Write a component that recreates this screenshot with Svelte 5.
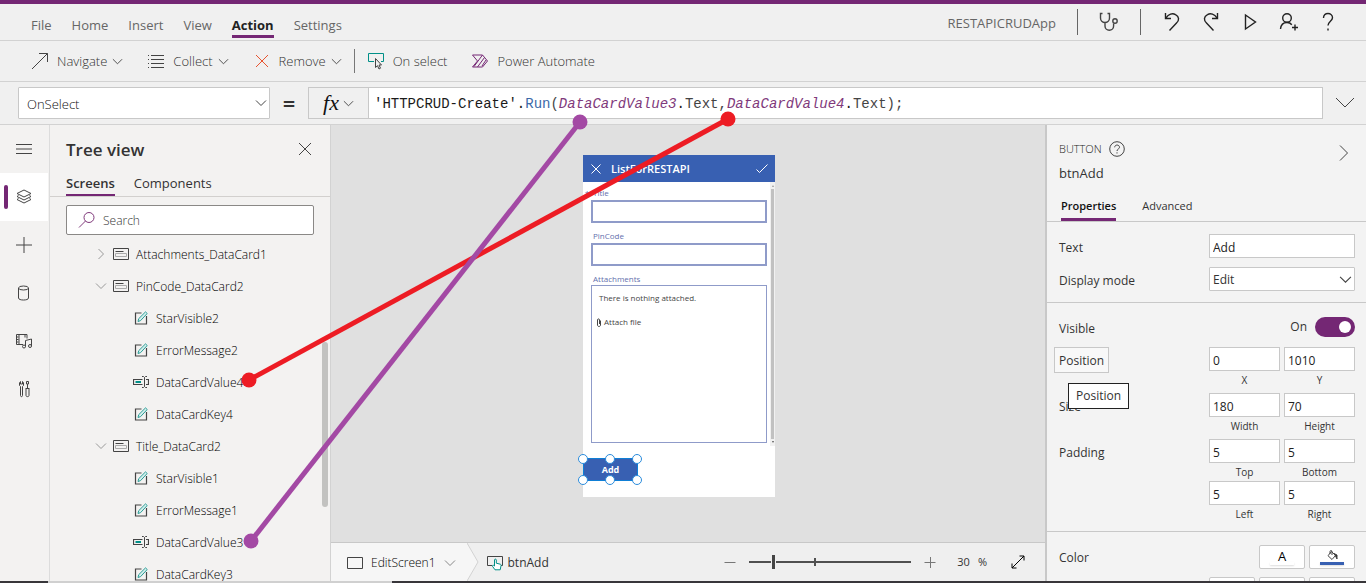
<script lang="ts">
  interface TreeItem {
    name: string;
    kind: 'card' | 'label' | 'input';
    open?: boolean;
  }

  interface Token {
    text: string;
    kind: 'name' | 'dot' | 'fn' | 'ref' | 'member';
  }

  const menu = ['File', 'Home', 'Insert', 'View', 'Action', 'Settings'];
  const railItems = ['Tree view', 'Insert', 'Data', 'Media', 'Advanced tools'];

  const tree: TreeItem[] = [
    { name: 'Attachments_DataCard1', kind: 'card', open: false },
    { name: 'PinCode_DataCard2', kind: 'card', open: true },
    { name: 'StarVisible2', kind: 'label' },
    { name: 'ErrorMessage2', kind: 'label' },
    { name: 'DataCardValue4', kind: 'input' },
    { name: 'DataCardKey4', kind: 'label' },
    { name: 'Title_DataCard2', kind: 'card', open: true },
    { name: 'StarVisible1', kind: 'label' },
    { name: 'ErrorMessage1', kind: 'label' },
    { name: 'DataCardValue3', kind: 'input' },
    { name: 'DataCardKey3', kind: 'label' }
  ];

  const formula: Token[] = [
    { text: "'HTTPCRUD-Create'", kind: 'name' },
    { text: '.', kind: 'dot' },
    { text: 'Run', kind: 'fn' },
    { text: '(', kind: 'member' },
    { text: 'DataCardValue3', kind: 'ref' },
    { text: '.', kind: 'dot' },
    { text: 'Text,', kind: 'member' },
    { text: 'DataCardValue4', kind: 'ref' },
    { text: '.', kind: 'dot' },
    { text: 'Text);', kind: 'member' }
  ];

  const groups = [
    { label: 'Position', fields: [['X', '0'], ['Y', '1010']] },
    { label: 'Size', fields: [['Width', '180'], ['Height', '70']] },
    { label: 'Padding', fields: [['Top', '5'], ['Bottom', '5'], ['Left', '5'], ['Right', '5']] }
  ];

  let activeMenu = $state('Action');
  let activeRail = $state('Tree view');
  let visible = $state(true);
  let zoom = $state(14);
</script>

{#snippet chevron(size: number)}
  <svg class="chevron" width={size} height={size} viewBox="0 0 12 12"><path d="M1 3.5l5 5 5-5" /></svg>
{/snippet}

<div class="app">
  <header class="menubar">
    <nav class="menu">
      {#each menu as item}
        <button class="menu-item" class:active={item === activeMenu} onclick={() => (activeMenu = item)}>{item}</button>
      {/each}
    </nav>
    <div class="app-actions">
      <span class="app-name">RESTAPICRUDApp</span>
      <span class="rule"></span>
      <button class="icon-btn" aria-label="App checker">
        <svg class="checker" width="20" height="20" viewBox="0 0 20 20">
          <path d="M3.500 1.500H1.500v4.500a4.500 4.500 0 0 0 9 0V1.500H8.500M6 10.500V14a4.300 4.300 0 0 0 8.600 0v-2.500" />
          <circle cx="16" cy="9" r="2.200" />
        </svg>
      </button>
      <span class="rule"></span>
      <button class="icon-btn" aria-label="Undo">
        <svg width="18" height="20" viewBox="0 0 18 20"><path class="bold" d="M2.500 1v5.500H8M3 6C5.500 2 9.500 .8 12.500 2.600c4 2 3.800 5.800 1 8.500L6.500 18.500" /></svg>
      </button>
      <button class="icon-btn" aria-label="Redo">
        <svg width="18" height="20" viewBox="0 0 18 20"><path class="bold" d="M15.500 1v5.500H10M15 6C12.500 2 8.500 .8 5.500 2.600c-4 2-3.800 5.800-1 8.500l7 7.400" /></svg>
      </button>
      <button class="icon-btn" aria-label="Preview the app">
        <svg width="18" height="20" viewBox="0 0 18 20"><path class="bold" d="M4.500 3v14l10-7z" /></svg>
      </button>
      <button class="icon-btn" aria-label="Share">
        <svg width="20" height="20" viewBox="0 0 20 20">
          <circle class="bold" cx="8" cy="6" r="4.300" />
          <path class="bold" d="M1.500 17c.4-4 3-6.500 6.500-6.500 2 0 3.700.8 4.800 2.200M16 12.500v6M13 15.500h6" />
        </svg>
      </button>
      <button class="icon-btn" aria-label="Help">
        <svg width="18" height="20" viewBox="0 0 18 20"><path class="bold" d="M4.500 6c0-3 2-4.500 4.500-4.500s4.500 1.700 4.500 4.200C13.500 9 9 9.500 9 13.500M9 16.500v2" /></svg>
      </button>
    </div>
  </header>

  <div class="ribbon">
    <button class="ribbon-btn">
      <svg width="18" height="18" viewBox="0 0 18 18"><path d="M1 17L16.500 1.500M8 1.500h8.500V10" /></svg>
      <span>Navigate</span>{@render chevron(11)}
    </button>
    <button class="ribbon-btn">
      <svg width="18" height="18" viewBox="0 0 18 18"><path d="M4 3.500h13M4 7.500h13M4 11.500h13M4 15.500h13M1 3.500h1M1 7.500h1M1 11.500h1M1 15.500h1" /></svg>
      <span>Collect</span>{@render chevron(11)}
    </button>
    <button class="ribbon-btn">
      <svg class="remove" width="18" height="18" viewBox="0 0 18 18"><path d="M3 3l12 12M15 3L3 15" /></svg>
      <span>Remove</span>{@render chevron(11)}
    </button>
    <span class="ribbon-rule"></span>
    <button class="ribbon-btn">
      <svg width="18" height="18" viewBox="0 0 18 18">
        <path class="teal" d="M7 9.500H1.500v-8h15v8H14" />
        <path class="pointer" d="M8.500 6.500v9l2-1.800 1.500 3.300 1.500-.8-1.500-3.200h2.500z" />
      </svg>
      <span>On select</span>
    </button>
    <button class="ribbon-btn">
      <svg class="flow" width="18" height="18" viewBox="0 0 18 18"><path d="M1.500 3h10l5 6-5 6h-10M1.500 3l5 6-5 6M11.500 3L3 14.500M13.500 5.500L6.500 15M15 8l-4 6" /></svg>
      <span>Power Automate</span>
    </button>
  </div>

  <div class="formula-bar">
    <div class="select property">
      <select aria-label="Property"><option>OnSelect</option></select>
      {@render chevron(12)}
    </div>
    <span class="equals">=</span>
    <div class="formula">
      <button class="fx" aria-label="Insert function"><i>fx</i>{@render chevron(11)}</button>
      <div class="code" role="textbox" tabindex="0" aria-label="Formula" contenteditable="true" spellcheck="false">{#each formula as token}<span class={token.kind}>{token.text}</span>{/each}</div>
    </div>
    <button class="icon-btn expand" aria-label="Expand formula bar">
      <svg width="20" height="12" viewBox="0 0 20 12"><path d="M1 1l9 9 9-9" /></svg>
    </button>
  </div>

  <main class="workspace">
    <nav class="rail">
      <button class="rail-btn" aria-label="Menu">
        <svg width="18" height="18" viewBox="0 0 18 18"><path d="M1 4.500h16M1 9h16M1 13.500h16" /></svg>
      </button>
      {#each railItems as item}
        <button class="rail-btn" class:active={item === activeRail} aria-label={item} onclick={() => (activeRail = item)}>
          <svg width="18" height="18" viewBox="0 0 18 18">
            {#if item === 'Tree view'}
              <path d="M9 2l7 3.500L9 9 2 5.500zM3.500 7.500L2 8.500 9 12l7-3.500-1.500-1M3.500 10.500L2 11.500 9 15l7-3.500-1.500-1" />
            {:else if item === 'Insert'}
              <path d="M9 1v16M1 9h16" />
            {:else if item === 'Data'}
              <ellipse cx="8.500" cy="4" rx="5" ry="2" />
              <path d="M3.500 4v10c0 2.700 10 2.700 10 0V4" />
            {:else if item === 'Media'}
              <path d="M8 12.500H1.500v-10h10.500v4M4 2.500v10M1.500 5h2M1.500 7.500h2M1.500 10h2M10 2.500v3" />
              <path d="M10.500 14.500V8.500l6-1.500v7" />
              <circle cx="9" cy="14.500" r="1.500" /><circle cx="15" cy="14" r="1.500" />
            {:else}
              <path d="M5.500 1.500L4.500 3v2.500l1 1v9c0 1.500 2 1.500 2 0v-9l1-1V3l-1-1.500v2.500h-2zM10.500 8.500h4M11 9v6.500c0 1.500 3 1.500 3 0V9M12.500 8.500V4M11.500 1.500h2V4h-2z" />
            {/if}
          </svg>
        </button>
      {/each}
    </nav>

    <aside class="tree">
      <div class="tree-head">
        <h2>Tree view</h2>
        <button class="icon-btn" aria-label="Close">
          <svg width="14" height="14" viewBox="0 0 14 14"><path d="M1 1l12 12M13 1L1 13" /></svg>
        </button>
      </div>
      <div class="tree-tabs">
        <button class="tree-tab active">Screens</button>
        <button class="tree-tab">Components</button>
      </div>
      <label class="search">
        <svg width="18" height="18" viewBox="0 0 18 18"><circle cx="11" cy="6.500" r="5" /><path d="M7.500 10L1 16.500" /></svg>
        <input type="text" placeholder="Search" aria-label="Search" />
      </label>
      <div class="tree-body">
        <ul>
          {#each tree as item}
            <li class={item.kind}>
              {#if item.kind === 'card'}
                <button class="twisty" class:closed={!item.open} aria-label="Toggle {item.name}">{@render chevron(12)}</button>
                <svg width="16" height="12" viewBox="0 0 16 12"><path d="M.5.5h15v11H.5zM2.500 3.500h8" /><path class="pale" d="M2.500 5.500h11v3h-11z" /></svg>
              {:else if item.kind === 'label'}
                <svg width="16" height="14" viewBox="0 0 16 14">
                  <path class="solid" d="M8.500 2H2.500v11h11V5" />
                  <path class="pen" d="M5 10.500l.7-2.800L12.500.9l1.700 1.600L7.600 9.600z" />
                </svg>
              {:else}
                <svg width="16" height="14" viewBox="0 0 16 14">
                  <path class="solid" d="M9.500 4.500h-9v5h9M13 4.500h2.500v5H13" />
                  <path class="bar" d="M2.500 7h5.500" />
                  <path d="M9 1.500h1.500l1 1 1-1H14M9 12.500h1.500l1-1 1 1H14M11.500 2.500v9" />
                </svg>
              {/if}
              <span>{item.name}</span>
            </li>
          {/each}
        </ul>
        <div class="tree-scroll"></div>
      </div>
    </aside>

    <section class="stage">
      <div class="canvas">
        <div class="phone">
          <div class="phone-head">
            <svg width="12" height="12" viewBox="0 0 12 12"><path d="M1.500 1.500l9 9M10.500 1.500l-9 9" /></svg>
            <strong>ListForRESTAPI</strong>
            <svg width="12" height="12" viewBox="0 0 12 12"><path d="M.5 6.500l3 3 8-8" /></svg>
          </div>
          <div class="form">
            <div class="fields">
              <label for="title"><span class="star">*</span>Title</label>
              <input id="title" type="text" />
              <label for="pin">PinCode</label>
              <input id="pin" type="text" />
              <span class="caption">Attachments</span>
              <div class="attachments">
                <span>There is nothing attached.</span>
                <button class="attach">
                  <svg width="4" height="9" viewBox="0 0 4 9"><path d="M3.500 2.500v4.500c0 2-3 2-3 0V2c0-1.500 2-1.500 2 0v4" /></svg>
                  Attach file
                </button>
              </div>
            </div>
            <div class="form-scroll"><span class="up"></span><span class="thumb"></span><span class="down"></span></div>
          </div>
          <button class="add">
            Add
            {#each ['tl', 'tc', 'tr', 'bl', 'bc', 'br'] as spot}<span class="handle {spot}"></span>{/each}
          </button>
        </div>
      </div>

      <footer class="statusbar">
        <button class="crumb screen">
          <svg width="16" height="12" viewBox="0 0 16 12"><path d="M.5.5h15v11H.5z" /></svg>
          <span>EditScreen1</span>
          {@render chevron(12)}
        </button>
        <svg class="crumb-edge" width="12" height="38" viewBox="0 0 12 38"><path class="fill" d="M0 0l11 19L0 38z" /><path d="M0 0l11 19L0 38" /></svg>
        <button class="crumb">
          <svg width="16" height="16" viewBox="0 0 16 16">
            <path d="M5 10.500H.5V1.500h15v9H14" />
            <path class="hand" d="M7.500 11V5c0-1.200 1.800-1.200 1.800 0v3.200l4 1c.8.3.9.8.7 1.600l-.8 4H8l-2.500-3.500c-.5-.9.7-1.600 2-.3z" />
          </svg>
          <span>btnAdd</span>
        </button>
        <div class="zoom">
          <button class="icon-btn" aria-label="Zoom out"><svg class="step" width="12" height="12" viewBox="0 0 12 12"><path d="M.5 6.500h11" /></svg></button>
          <div class="slider"><input type="range" aria-label="Zoom" bind:value={zoom} /><span class="tick"></span></div>
          <button class="icon-btn" aria-label="Zoom in"><svg class="step" width="12" height="12" viewBox="0 0 12 12"><path d="M.5 6.500h11M6.500 1v11" /></svg></button>
          <span class="percent"><span>30</span><span>%</span></span>
          <button class="icon-btn" aria-label="Fit to screen"><svg width="14" height="14" viewBox="0 0 14 14"><path class="fit" d="M1 13L13 1M8.500 1H13v4.500M1 8.500V13h4.500" /></svg></button>
        </div>
      </footer>
    </section>

    <aside class="props">
      <div class="props-head">
        <div class="props-kind">
          <span>BUTTON</span>
          <svg width="16" height="16" viewBox="0 0 16 16"><circle cx="8" cy="8" r="7.300" /><path d="M5.700 6.300c0-3 4.800-3 4.800 0C10.500 8 8 8 8 10M8 11.300v1.200" /></svg>
        </div>
        <div class="props-name">btnAdd</div>
        <button class="icon-btn collapse" aria-label="Collapse pane">
          <svg width="10" height="18" viewBox="0 0 10 18"><path d="M1 1.500L8.500 9 1 16.500" /></svg>
        </button>
      </div>
      <div class="props-tabs">
        <button class="props-tab active">Properties</button>
        <button class="props-tab">Advanced</button>
      </div>

      <div class="section basics">
        <div class="prop"><label for="text">Text</label><input id="text" type="text" value="Add" /></div>
        <div class="prop">
          <label for="mode">Display mode</label>
          <div class="select"><select id="mode"><option>Edit</option></select>{@render chevron(13)}</div>
        </div>
      </div>

      <div class="section">
        <div class="prop toggle-row">
          <label for="visible">Visible</label>
          <span class="toggle"><span>{visible ? 'On' : 'Off'}</span><input id="visible" type="checkbox" bind:checked={visible} /></span>
        </div>
        {#each groups as group}
          <div class="prop group">
            <span class="group-label" class:hovered={group.label === 'Position'}>
              {group.label}
              {#if group.label === 'Position'}<span class="tooltip" role="tooltip">Position</span>{/if}
            </span>
            <div class="pair">
              {#each group.fields as [name, value]}
                <label><input type="text" {value} /><span>{name}</span></label>
              {/each}
            </div>
          </div>
        {/each}
      </div>

      <div class="section colors">
        <div class="prop">
          <span class="color-label">Color</span>
          <div class="swatches">
            <button class="swatch" aria-label="Text color"><span class="letter">A</span><span class="ink"></span></button>
            <button class="swatch" aria-label="Fill color">
              <svg width="11" height="11" viewBox="0 0 11 11"><path d="M4.500 1.500l4 4-3.500 4-4-3.800zM3 4V1.500C3 .2 5 .2 5 1.500V5" /><path class="drop" d="M7 3.500l3 1.500v4L8.500 6z" /></svg>
              <span class="ink blue"></span>
            </button>
          </div>
        </div>
        <div class="swatches"><span class="swatch"></span><span class="swatch"></span><span class="swatch"></span></div>
      </div>
    </aside>
  </main>
  <div class="edge"><span></span></div>

  <svg class="links" width="1366" height="583" viewBox="0 0 1366 583">
    <g class="red"><path d="M249 380L728 119" /><circle cx="249" cy="380" r="7.500" /><circle cx="728" cy="119" r="7.500" /></g>
    <g class="purple"><path d="M251 541L580 122" /><circle cx="251" cy="541" r="7.500" /><circle cx="580" cy="122" r="7.500" /></g>
  </svg>
</div>

<style>
  :global(body) {
    margin: 0;
    overflow: hidden;
  }

  .app {
    position: relative;
    display: flex;
    flex-direction: column;
    height: 100vh;
    box-sizing: border-box;
    border-top: 4px solid #742774;
    background: #f0f0f0;
    color: #333;
    font-family: 'Open Sans', 'Noto Sans', sans-serif;
    font-size: 12px;
    line-height: 16px;
  }

  .app :global(*) {
    box-sizing: border-box;
  }

  button,
  input,
  select {
    margin: 0;
    font: inherit;
    color: inherit;
  }

  button {
    padding: 0;
    border: none;
    background: none;
    cursor: pointer;
  }

  svg {
    display: block;
    flex: none;
    fill: none;
    stroke: #444;
    stroke-width: 1;
  }

  .bold {
    stroke: #222;
    stroke-width: 1.4;
  }

  .checker {
    stroke-width: 1.4;
  }

  /* menu */
  .menubar {
    display: flex;
    flex: none;
    justify-content: space-between;
    height: 37px;
    padding: 0 28px 0 31px;
    border-bottom: 1px solid #d2d2d2;
  }

  .menu {
    display: flex;
    gap: 20px;
    padding-top: 9px;
    font-size: 13px;
    line-height: 24px;
    color: #666;
  }

  .menu-item {
    height: 25px;
    border-bottom: 3px solid transparent;
  }

  .menu-item.active {
    border-color: #742774;
    font-weight: 700;
    color: #222;
  }

  .app-actions {
    display: flex;
    align-items: center;
    gap: 19px;
  }

  .app-actions .icon-btn {
    width: 20px;
  }

  .app-name {
    padding-top: 2px;
    font-size: 13px;
    color: #666;
  }

  .rule {
    width: 1px;
    height: 26px;
    margin: 0 2px;
    background: #666;
  }

  .icon-btn {
    display: flex;
    align-items: center;
    justify-content: center;
  }

  /* ribbon */
  .ribbon {
    display: flex;
    flex: none;
    align-items: center;
    gap: 24px;
    height: 41px;
    padding-left: 31px;
    border-bottom: 1px solid #d2d2d2;
    font-size: 13px;
    font-weight: 300;
    color: #333;
  }

  .ribbon-btn {
    display: flex;
    align-items: center;
    gap: 8px;
  }

  .ribbon-btn .chevron {
    margin-left: -3px;
  }

  .ribbon-rule {
    width: 1px;
    height: 24px;
    margin: 0 -12px;
    background: #777;
  }

  .remove {
    stroke: #e8542f;
  }

  .teal {
    stroke: #009088;
  }

  .pointer {
    fill: #f0f0f0;
  }

  .flow {
    stroke: #742774;
  }

  /* formula bar */
  .formula-bar {
    display: flex;
    flex: none;
    align-items: center;
    height: 43px;
    padding: 0 11px 0 18px;
    border-bottom: 1px solid #d2d2d2;
  }

  .select {
    position: relative;
    height: 24px;
  }

  .select select {
    width: 100%;
    height: 100%;
    padding: 0 3px;
    border: 1px solid #c8c8c8;
    border-radius: 1px;
    background: #fff;
    appearance: none;
  }

  .select .chevron {
    position: absolute;
    top: 50%;
    right: 3px;
    margin-top: -6px;
    pointer-events: none;
  }

  .property {
    width: 252px;
    height: 32px;
  }

  .property select {
    padding: 2px 8px 0;
    font-size: 13px;
    font-weight: 300;
    color: #111;
  }

  .equals {
    width: 38px;
    font-size: 22px;
    font-weight: 600;
    text-align: center;
  }

  .formula {
    display: flex;
    flex: 1;
    height: 32px;
    border: 1px solid #c8c8c8;
  }

  .fx {
    display: flex;
    flex: none;
    align-items: center;
    justify-content: center;
    gap: 4px;
    width: 60px;
    border-right: 1px solid #c8c8c8;
    font-family: 'Liberation Serif', serif;
    font-size: 22px;
    color: #111;
  }

  .code {
    flex: 1;
    padding-left: 5px;
    background: #fff;
    font-family: 'Liberation Mono', monospace;
    font-size: 14px;
    line-height: 32px;
    white-space: pre;
    outline: none;
  }

  .name,
  .dot {
    color: #1a1a1a;
  }

  .fn {
    color: #3b69a8;
  }

  .ref {
    font-style: italic;
    color: #80397b;
  }

  .member {
    color: #444;
  }

  .expand {
    width: 20px;
    margin-left: 12px;
  }

  /* workspace */
  .workspace {
    display: flex;
    flex: 1;
    min-height: 0;
  }

  .rail {
    flex: none;
    width: 50px;
    border-right: 1px solid #dcdcdc;
    background: #f3f2f1;
  }

  .rail-btn {
    position: relative;
    display: flex;
    align-items: center;
    justify-content: center;
    width: 48px;
    height: 48px;
  }

  .rail-btn.active {
    background: #fff;
  }

  .rail-btn.active::before {
    content: '';
    position: absolute;
    left: 4px;
    width: 4px;
    height: 24px;
    border-radius: 2px;
    background: #742774;
  }

  .tree {
    display: flex;
    flex: none;
    flex-direction: column;
    width: 281px;
    border-right: 1px solid #d2d2d2;
    background: #f3f2f1;
  }

  .tree-head {
    display: flex;
    align-items: center;
    justify-content: space-between;
    height: 48px;
    padding: 0 18px 0 16px;
  }

  h2 {
    margin: 0;
    padding-top: 1px;
    font-size: 17px;
    font-weight: 600;
    line-height: 24px;
  }

  .tree-tabs {
    display: flex;
    gap: 19px;
    height: 24px;
    padding-left: 16px;
    border-bottom: 1px solid #d2d0ce;
    font-size: 13px;
  }

  .tree-tab {
    height: 23px;
    padding-bottom: 2px;
    border-bottom: 2px solid transparent;
  }

  .tree-tab.active {
    border-color: #742774;
    font-weight: 600;
  }

  .search {
    display: flex;
    flex: none;
    align-items: center;
    gap: 7px;
    height: 30px;
    margin: 8px 16px 3px;
    padding-left: 11px;
    border: 1px solid #8a8886;
    border-radius: 2px;
    background: #fff;
  }

  .search svg {
    stroke: #80397b;
  }

  .search input {
    width: 100%;
    padding: 2px 0 0;
    border: none;
    outline: none;
    font-weight: 300;
  }

  .search input::placeholder {
    color: #333;
    opacity: 1;
  }

  .tree-body {
    position: relative;
    flex: 1;
    min-height: 0;
    overflow: hidden;
  }

  ul {
    margin: 0;
    padding: 0;
    list-style: none;
  }

  li {
    display: flex;
    align-items: center;
    gap: 7px;
    height: 32px;
    padding-left: 83px;
    font-weight: 300;
    color: #000;
  }

  li span {
    padding-top: 1px;
  }

  .card {
    padding-left: 45px;
  }

  .twisty {
    margin-right: -1px;
  }

  .twisty .chevron {
    stroke: #999;
  }

  .twisty.closed .chevron {
    transform: rotate(-90deg);
  }

  .pale {
    stroke: #aaa;
  }

  .solid {
    stroke-width: 1.2;
  }

  .pen {
    fill: #d5efed;
    stroke: #2a9d97;
  }

  .bar {
    stroke: #009088;
    stroke-width: 2;
  }

  .tree-scroll {
    position: absolute;
    top: 104px;
    right: 2px;
    width: 6px;
    height: 165px;
    border-radius: 3px;
    background: #c2c2c0;
  }

  /* stage */
  .stage {
    display: flex;
    flex: 1;
    flex-direction: column;
    min-width: 0;
  }

  .canvas {
    display: flex;
    flex: 1;
    align-items: flex-start;
    justify-content: center;
    min-height: 0;
    padding: 30px 18px 0 0;
    background: #e0e0e0;
  }

  .phone {
    width: 192px;
    padding-bottom: 16px;
    background: #fff;
    font-size: 8px;
    line-height: 12px;
  }

  .phone-head {
    display: flex;
    align-items: center;
    gap: 9px;
    height: 27px;
    padding: 0 7px;
    background: #3860b2;
    color: #fff;
    font-size: 11px;
  }

  .phone-head strong {
    flex: 1;
    font-weight: 600;
  }

  .phone-head svg {
    stroke: #fff;
  }

  .form {
    display: flex;
    height: 264px;
  }

  .fields {
    display: flex;
    flex: 1;
    flex-direction: column;
    padding: 5px 3px 3px 8px;
    color: #6470ad;
  }

  .fields label,
  .caption {
    position: relative;
    padding: 0 0 1px 2px;
  }

  .star {
    position: absolute;
    left: -6px;
  }

  .fields input {
    height: 23px;
    margin-bottom: 7px;
    border: 2px solid #8f9bc9;
  }

  .fields label + input + .caption {
    padding-bottom: 0;
  }

  .attachments {
    display: flex;
    flex: 1;
    flex-direction: column;
    align-items: flex-start;
    gap: 12px;
    padding: 6px 7px;
    border: 1px solid #8f9bc9;
    color: #444;
  }

  .attach {
    display: flex;
    align-items: center;
    gap: 3px;
    margin-left: -2px;
  }

  .form-scroll {
    display: flex;
    flex-direction: column;
    align-items: center;
    gap: 2px;
    width: 5px;
    padding: 2px 0;
    background: #f1f1f1;
  }

  .thumb {
    flex: 1;
    width: 3px;
    background: #c1c1c1;
  }

  .up,
  .down {
    border: 1px solid transparent;
    border-bottom: 2px solid #999;
  }

  .down {
    border-bottom: 1px solid transparent;
    border-top: 2px solid #555;
  }

  .add {
    position: relative;
    display: block;
    width: 55px;
    height: 23px;
    margin-top: 12px;
    border: 1px solid #0f7fd6;
    background: #3860b2;
    color: #fff;
    font-size: 9px;
    font-weight: 700;
  }

  .handle {
    position: absolute;
    width: 10px;
    height: 10px;
    border: 1px solid #2a8bdc;
    border-radius: 50%;
    background: #fff;
  }

  .tl,
  .tc,
  .tr {
    top: -5px;
  }

  .bl,
  .bc,
  .br {
    bottom: -5px;
  }

  .tl,
  .bl {
    left: -6px;
  }

  .tc,
  .bc {
    left: 21px;
  }

  .tr,
  .br {
    right: -5px;
  }

  /* status bar */
  .statusbar {
    display: flex;
    flex: none;
    height: 39px;
    border-top: 1px solid #c8c8c8;
    background: #efefef;
  }

  .crumb {
    display: flex;
    align-items: center;
    gap: 5px;
    padding: 2px 8px 0;
  }

  .screen {
    gap: 8px;
    padding: 2px 11px 0 16px;
    background: #f6f6f6;
    font-weight: 300;
    color: #000;
  }

  .screen .chevron {
    stroke: #888;
  }

  .crumb-edge {
    stroke: #d2d2d2;
  }

  .fill {
    fill: #f6f6f6;
    stroke: none;
  }

  .hand {
    fill: #fff;
    stroke: #009088;
  }

  .zoom {
    display: flex;
    align-items: center;
    gap: 13px;
    margin-left: auto;
    padding-right: 20px;
  }

  .step {
    stroke: #777;
  }

  .slider {
    position: relative;
    display: flex;
    width: 162px;
  }

  .slider input {
    width: 100%;
    height: 16px;
    background: linear-gradient(#505050, #505050) center / 100% 2px no-repeat;
    appearance: none;
  }

  .slider input::-webkit-slider-thumb {
    width: 5px;
    height: 16px;
    border: 1px solid #efefef;
    background: #444;
    appearance: none;
  }

  .tick {
    position: absolute;
    top: 4px;
    left: 40%;
    width: 2px;
    height: 8px;
    background: #505050;
  }

  .percent {
    display: flex;
    gap: 8px;
    margin: 0 11px 0 8px;
    font-size: 11px;
  }

  .fit {
    stroke: #000;
  }

  /* properties */
  .props {
    flex: none;
    width: 321px;
    overflow: hidden;
    border-left: 2px solid #c8c8c8;
    background: #f3f3f3;
  }

  .props-head {
    position: relative;
    height: 66px;
    padding: 15px 12px 0;
  }

  .props-kind {
    display: flex;
    align-items: center;
    gap: 7px;
    color: #222;
    font-size: 11px;
    font-weight: 300;
  }

  .props-kind span {
    padding-top: 1px;
  }

  .props-name {
    padding-top: 6px;
    font-size: 13px;
    line-height: 20px;
  }

  .collapse {
    position: absolute;
    top: 19px;
    right: 17px;
  }

  .props-tabs {
    display: flex;
    gap: 26px;
    height: 31px;
    padding-left: 14px;
    border-bottom: 1px solid #c8c8c8;
    font-size: 11px;
  }

  .props-tab {
    padding-top: 2px;
    border-bottom: 3px solid transparent;
  }

  .props-tab.active {
    border-color: #742774;
    font-weight: 600;
    color: #111;
  }

  .section {
    padding: 12px 11px 12px 12px;
    border-bottom: 1px solid #c8c8c8;
  }

  .basics {
    display: grid;
    gap: 9px;
    padding-bottom: 11px;
  }

  .prop {
    display: grid;
    grid-template-columns: 1fr 146px;
    align-items: center;
  }

  .basics label,
  .toggle-row label {
    padding-top: 3px;
  }

  .prop input[type='text'] {
    width: 100%;
    height: 24px;
    padding: 2px 3px 0;
    border: 1px solid #c8c8c8;
    background: #fff;
    color: #222;
  }

  .basics select {
    padding-top: 2px;
  }

  .toggle-row {
    margin: 2px 0 10px;
  }

  .toggle {
    display: flex;
    align-items: center;
    justify-content: flex-end;
    gap: 8px;
  }

  .toggle input {
    display: flex;
    align-items: center;
    width: 40px;
    height: 20px;
    padding: 0 4px;
    border-radius: 10px;
    background: #999;
    appearance: none;
  }

  .toggle input:checked {
    justify-content: flex-end;
    background: #742774;
  }

  .toggle input::before {
    content: '';
    width: 12px;
    height: 12px;
    border-radius: 50%;
    background: #fff;
  }

  .group {
    align-items: start;
    margin-bottom: 4px;
  }

  .group:last-child {
    margin-bottom: -4px;
  }

  .group-label {
    position: relative;
    justify-self: start;
    margin-left: -5px;
    padding: 5px 4px 3px;
    border: 1px solid transparent;
  }

  .hovered {
    border-color: #c8c8c8;
    background: #f8f8f8;
  }

  .tooltip {
    position: absolute;
    top: 35px;
    left: 13px;
    z-index: 1;
    padding: 4px 7px;
    border: 1px solid #222;
    background: #fff;
  }

  .pair {
    display: grid;
    grid-template-columns: 1fr 1fr;
    gap: 0 4px;
  }

  .pair label {
    display: flex;
    flex-direction: column;
    align-items: center;
  }

  .pair label span {
    height: 18px;
    font-size: 10px;
    line-height: 18px;
  }

  .swatches {
    display: flex;
    justify-content: flex-end;
    gap: 4px;
    margin-bottom: 8px;
  }

  .color-label {
    padding-bottom: 6px;
  }

  .swatch {
    display: flex;
    flex-direction: column;
    align-items: center;
    justify-content: space-between;
    width: 46px;
    height: 24px;
    padding: 4px 0 3px;
    border: 1px solid #c8c8c8;
    border-radius: 2px;
    background: #fff;
  }

  .letter {
    font-size: 13px;
    line-height: 12px;
    color: #000;
  }

  .ink {
    width: 24px;
    height: 3px;
    background: #fff;
    box-shadow: 0 1px 2px #ddd;
  }

  .blue {
    background: #3860b2;
  }

  .drop {
    fill: #222;
  }

  .colors {
    padding-top: 13px;
  }

  .edge {
    flex: none;
    height: 2px;
    padding-left: 48px;
    background: #38363a;
  }

  .edge span {
    display: block;
    width: 344px;
    height: 2px;
    background: #d0d0d0;
  }

  /* annotation lines from the formula to the tree */
  .links {
    position: absolute;
    top: -4px;
    left: 0;
    z-index: 2;
    pointer-events: none;
  }

  .links path {
    stroke-width: 5;
  }

  .links circle {
    stroke: none;
  }

  .red {
    fill: #ed1c24;
    stroke: #ed1c24;
  }

  .purple {
    fill: #a349a4;
    stroke: #a349a4;
  }
</style>
